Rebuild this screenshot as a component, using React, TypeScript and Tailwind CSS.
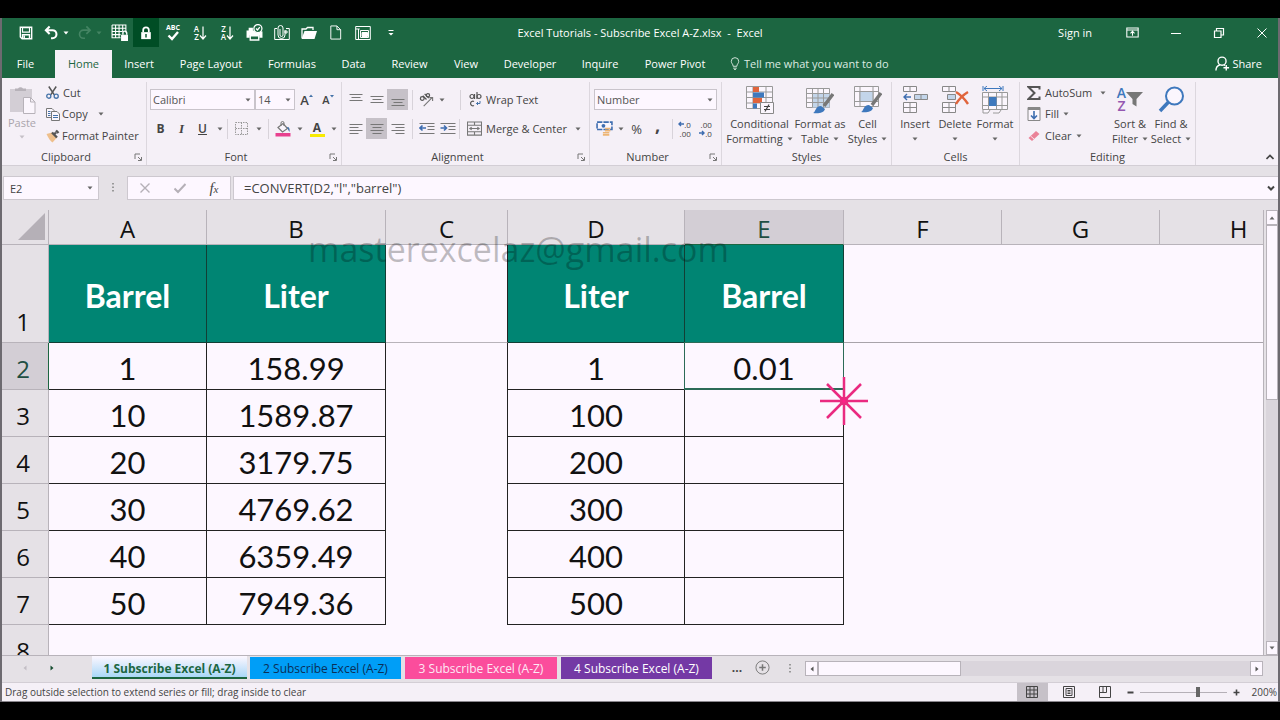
import React, { ReactNode } from "react";

const headers = ["A", "B", "C", "D", "E", "F", "G", "H"];

const rows = [
    { left: ["1", "158.99"], right: ["1", "0.01"] },
    { left: ["10", "1589.87"], right: ["100", ""] },
    { left: ["20", "3179.75"], right: ["200", ""] },
    { left: ["30", "4769.62"], right: ["300", ""] },
    { left: ["40", "6359.49"], right: ["400", ""] },
    { left: ["50", "7949.36"], right: ["500", ""] },
];

const menuTabs = [
    { name: "Insert", width: "w-[54px]" },
    { name: "Page Layout", width: "w-[90px]" },
    { name: "Formulas", width: "w-[72px]" },
    { name: "Data", width: "w-[51px]" },
    { name: "Review", width: "w-[61px]" },
    { name: "View", width: "w-[52px]" },
    { name: "Developer", width: "w-[76px]" },
    { name: "Inquire", width: "w-[64px]" },
    { name: "Power Pivot", width: "w-[86px]" },
];

function Icon({ children, className = "size-4", box = "0 0 16 16" }: { children: ReactNode; className?: string; box?: string }) {
    return (
        <svg viewBox={box} className={`shrink-0 ${className}`} fill="none" stroke="currentColor" aria-hidden="true">
            {children}
        </svg>
    );
}

function Caret({ className = "text-[#666]" }: { className?: string }) {
    return (
        <svg viewBox="0 0 6 4" className={`h-1 w-1.5 shrink-0 ${className}`} fill="currentColor" aria-hidden="true">
            <path d="M0.5 0.5h5L3 3.5z" />
        </svg>
    );
}

function Divider() {
    return <span className="h-5 w-px shrink-0 bg-[#d8d3da]" />;
}

interface ToolProps {
    label: string;
    width?: string;
    active?: boolean;
    children: ReactNode;
}

function Tool({ label, width = "w-[21px]", active, children }: ToolProps) {
    return (
        <button aria-label={label} className={`flex h-[21px] shrink-0 items-center justify-center ${width} ${active ? "bg-[#c6c1c8]" : ""}`}>
            {children}
        </button>
    );
}

function Group({ title, width, launcher, children }: { title: string; width: string; launcher?: boolean; children: ReactNode }) {
    return (
        <section className={`flex shrink-0 flex-col ${width}`}>
            <div className="flex flex-1 border-r border-[#dcd7de]">{children}</div>
            <div className={`relative flex h-4 items-center justify-center border-r border-[#dcd7de] ${launcher ? "pr-4" : ""}`}>
                <h2>{title}</h2>
                {launcher && (
                    <button aria-label={`${title} settings`} className="absolute right-1 top-1">
                        <Icon className="size-2 text-[#777]" box="0 0 8 8">
                            <path d="M1 6V1h5M4 4l3 3M7.5 4v3.5H4" />
                        </Icon>
                    </button>
                )}
            </div>
        </section>
    );
}

function BigTool({ icon, lines, width }: { icon: ReactNode; lines: string[]; width: string }) {
    return (
        <button className={`flex shrink-0 flex-col items-center pt-1 leading-[15px] ${width}`}>
            <span className="flex h-[30px] items-start justify-center">{icon}</span>
            <span className="whitespace-nowrap">{lines[0]}</span>
            <span className="flex h-[15px] items-center gap-1 whitespace-nowrap">
                {lines[1]}
                <Caret />
            </span>
        </button>
    );
}

function Dropdown({ label, value, width }: { label: string; value: string; width: string }) {
    return (
        <label className={`relative flex h-[21px] items-center ${width}`}>
            <select aria-label={label} defaultValue={value} className="h-full w-full appearance-none border border-[#c9c4cb] bg-[#fdf7ff] px-0.5 text-[11px] text-[#555] outline-none">
                <option>{value}</option>
            </select>
            <span className="pointer-events-none absolute right-1 flex">
                <Caret />
            </span>
        </label>
    );
}

/* Horizontal strokes used by the text alignment buttons */
function Lines({ d }: { d: string }) {
    return (
        <Icon className="size-[14px] text-[#777]" box="0 0 14 14">
            <path d={d} />
        </Icon>
    );
}

function TitleBar() {
    return (
        <header className="flex h-[29px] items-center text-white">
            <div className="flex h-full min-w-0 flex-1 basis-0 items-center">
                <span className="w-2.5" />
                <Tool label="Save" width="w-[27px]">
                    <Icon className="size-[14px]">
                        <path d="M1.5 1.5h13v13h-11l-2-2z" strokeWidth="1.6" />
                        <path d="M4 2h8v5H4z" strokeWidth="1.3" />
                        <path d="M4 14v-4h8v4M6 11v3" strokeWidth="1.6" />
                    </Icon>
                </Tool>
                <Tool label="Undo" width="w-[34px]">
                    <Icon className="mr-1 size-[15px]">
                        <path d="M6 1.5L2 5.5l4 4M2.5 5.5H9a4.3 4.3 0 0 1 0 8.6H7.5" strokeWidth="2.2" />
                    </Icon>
                    <Caret className="text-white" />
                </Tool>
                <span className="flex text-[#448463]">
                    <Tool label="Redo" width="w-[33px]">
                        <Icon className="mr-1 size-[15px]">
                            <path d="M10 1.5l4 4-4 4M13.5 5.5H7a4.3 4.3 0 0 0 0 8.6h1.5" strokeWidth="1.8" />
                        </Icon>
                        <Caret className="text-[#448463]" />
                    </Tool>
                </span>
                <Tool label="Protect sheet" width="w-[27px]">
                    <Icon className="size-[17px]">
                        <path d="M1 1h13v7M1 1v12h8M1 4h13M1 7h10M1 10h8M4.3 1v12M7.6 1v12M11 1v6" />
                        <path d="M10 10.5h6V15.5h-6z" fill="currentColor" />
                        <path d="M11.2 10V8.5a1.8 1.8 0 0 1 3.6 0V10" strokeWidth="1.3" />
                    </Icon>
                </Tool>
                <button aria-label="Lock cell" className="flex h-full w-[26px] items-center justify-center bg-[#004d25]">
                    <Icon className="size-[14px]">
                        <path d="M2.5 7h11v8h-11z" fill="currentColor" stroke="none" />
                        <path d="M4.8 7V4.7a3.2 3.2 0 0 1 6.4 0V7" strokeWidth="2" />
                        <path d="M8 9v4" stroke="#004d25" strokeWidth="1.6" />
                    </Icon>
                </button>
                <Tool label="Spelling" width="w-[28px]">
                    <span className="flex flex-col items-center">
                        <span className="text-[7px] font-bold leading-[7px]">ABC</span>
                        <Icon className="h-2.5 w-3" box="0 0 12 10">
                            <path d="M1.5 4.5L5 8l6-7" strokeWidth="2.4" />
                        </Icon>
                    </span>
                </Tool>
                {["AZ", "ZA"].map((order) => (
                    <Tool key={order} label={`Sort ${order}`} width="w-[27px]">
                        <span className="flex flex-col text-[8px] font-semibold leading-[8px]">
                            <span>{order[0]}</span>
                            <span>{order[1]}</span>
                        </span>
                        <Icon className="h-3.5 w-2" box="0 0 8 14">
                            <path d="M4 0.5V13M1 9.5l3 3.5 3-3.5" strokeWidth="1.2" />
                        </Icon>
                    </Tool>
                ))}
                <Tool label="Print preview" width="w-[27px]">
                    <Icon className="size-[17px]">
                        <path d="M0.5 6h11l4 1v6h-3v-2.5H3.5V13h-3zM2.5 3.5h4V6h-4z" fill="currentColor" stroke="none" />
                        <path d="M4 11h8v4H4z" strokeWidth="1.3" />
                        <circle cx="11.2" cy="4.3" r="3.8" fill="#1c6641" strokeWidth="1.2" />
                        <path d="M9.5 4.3l1.3 1.3 2.2-2.7" strokeWidth="1.2" />
                    </Icon>
                </Tool>
                <Tool label="Attach" width="w-[27px]">
                    <Icon className="size-4">
                        <path d="M3 3.5H0.7v11h14.6V3.5H12M11 6h2v2h-2z" />
                        <path d="M4 10V3a2.5 2.5 0 0 1 5 0v7a1.5 1.5 0 0 1-3 0V4M4 10a3.5 3.5 0 0 0 7 0V5" />
                    </Icon>
                </Tool>
                <Tool label="Open" width="w-[27px]">
                    <Icon className="size-4">
                        <path d="M1 13V4h4l1.5-1.5H12V5" strokeWidth="1.3" />
                        <path d="M3.5 6H16l-2.5 8H0.5z" fill="currentColor" stroke="none" />
                    </Icon>
                </Tool>
                <Tool label="New" width="w-[27px]">
                    <Icon className="size-[15px]">
                        <path d="M3 1h6.5L13.5 5v10H3zM9.5 1v4h4" />
                    </Icon>
                </Tool>
                <Tool label="Form" width="w-[28px]">
                    <Icon className="size-4">
                        <path d="M0.7 1.5h14.6v13H0.7zM0.7 4h4M3.5 4v10" />
                        <path d="M5.5 5.5h8v7h-8z" />
                        <path d="M7 7.5h5.5v4H7z" fill="currentColor" />
                    </Icon>
                </Tool>
                <Tool label="Customize toolbar" width="w-[27px]">
                    <Icon className="size-2" box="0 0 8 8">
                        <path d="M1.5 1.5h5" />
                        <path d="M1.5 4h5L4 6.5z" fill="currentColor" stroke="none" />
                    </Icon>
                </Tool>
            </div>
            <h1 className="whitespace-pre text-[11px]">Excel Tutorials - Subscribe Excel A-Z.xlsx  -  Excel</h1>
            <div className="flex min-w-0 flex-1 basis-0 items-center justify-end">
                <button className="mr-[29px]">Sign in</button>
                <Tool label="Ribbon display options" width="w-[22px]">
                    <Icon className="size-[13px]">
                        <path d="M1 2.5h14v11H1zM1 5h14M8 12V6.5M5.5 9L8 6.5 10.5 9" strokeWidth="1.3" />
                    </Icon>
                </Tool>
                <Tool label="Minimize" width="w-[65px]">
                    <Icon className="size-3" box="0 0 12 12">
                        <path d="M1 6.5h10" />
                    </Icon>
                </Tool>
                <Tool label="Restore" width="w-[22px]">
                    <Icon className="size-3" box="0 0 12 12">
                        <path d="M1.5 4h6.5v6.5H1.5zM3.5 4V1.5H10.5V8H8" strokeWidth="1.2" />
                    </Icon>
                </Tool>
                <span className="w-4" />
                <Tool label="Close" width="w-8">
                    <Icon className="size-3" box="0 0 12 12">
                        <path d="M1.5 1.5l9 9M10.5 1.5l-9 9" />
                    </Icon>
                </Tool>
            </div>
        </header>
    );
}

function MenuBar() {
    return (
        <nav className="flex h-[31px] items-stretch pt-0.5 text-white">
            <button className="w-[47px]">File</button>
            <button className="ml-1.5 mt-px w-[57px] bg-[#f5f0f7] pb-px text-[#1c6641]">Home</button>
            {menuTabs.map((tab) => (
                <button key={tab.name} className={`whitespace-nowrap ${tab.width}`}>
                    {tab.name}
                </button>
            ))}
            <button className="ml-3 flex items-center gap-1 whitespace-nowrap text-[#dcebe2]">
                <Icon className="h-[13px] w-2.5" box="0 0 10 14">
                    <path d="M3 10C3 7.5 1 7 1 4.7a4 4 0 0 1 8 0C9 7 7 7.5 7 10zM3 12h4M4 13.5h2" />
                </Icon>
                Tell me what you want to do
            </button>
            <button className="ml-auto mr-4 flex items-center gap-0.5">
                <Icon className="size-[15px]">
                    <circle cx="7.5" cy="5.5" r="4.3" strokeWidth="1.5" />
                    <path d="M1 15.5c0-3.5 2-5.5 4.5-6.2M9.5 9.5l1 0.7M12 9.5v6M9 12.5h6" strokeWidth="1.5" />
                </Icon>
                Share
            </button>
        </nav>
    );
}

function Ribbon() {
    return (
        <div className="flex h-[88px] border-b border-[#d3ced5] bg-[#f5f0f7] pt-1 text-[#444]">
            <Group title="Clipboard" width="w-[145px]" launcher>
                <button className="flex w-10 flex-col items-center pt-1 text-[#aaa5ac]">
                    <Icon className="h-[29px] w-7" box="0 0 28 29">
                        <path d="M2 3h22v9h-9v14H2z" fill="#d3ced5" stroke="none" />
                        <path d="M7 5V2.5h3a3 3 0 0 1 5 0h3V5z" fill="#b7b2b9" stroke="none" />
                        <path d="M15.5 11.5h7l4.5 4.5v11.5H15.5zM22.5 11.5V16H27" fill="#fbf6fd" stroke="#b7b2b9" />
                    </Icon>
                    <span className="leading-4">Paste</span>
                    <span className="flex h-3 items-center">
                        <Caret className="text-[#c5c0c7]" />
                    </span>
                </button>
                <div className="flex flex-col">
                    <button className="flex h-[21px] items-center gap-1 pl-1">
                        <Icon className="size-[13px]" box="0 0 14 14">
                            <path d="M3 0.5l6 9M11 0.5l-6 9" stroke="#555" strokeWidth="1.6" />
                            <circle cx="3" cy="11" r="2.2" stroke="#4472a8" strokeWidth="1.4" />
                            <circle cx="11" cy="11" r="2.2" stroke="#4472a8" strokeWidth="1.4" />
                        </Icon>
                        Cut
                    </button>
                    <button className="flex h-[22px] items-center gap-0.5 pl-1">
                        <Icon className="size-[14px]" box="0 0 14 14">
                            <path d="M0.5 1.5h5.5l2 2v7H0.5z" fill="#fbf6fd" stroke="#777" />
                            <path d="M5.5 4.5H11l2.5 2.5v6.5h-8z" fill="#fbf6fd" stroke="#777" />
                            <path d="M2 4.5h2.5M2 6.5h2.5M2 8.5h2.5M7 8.5h5M7 10.5h5" stroke="#4472a8" />
                        </Icon>
                        Copy
                        <span className="ml-2 flex">
                            <Caret />
                        </span>
                    </button>
                    <button className="flex h-[22px] items-center gap-0.5 whitespace-nowrap pl-1">
                        <Icon className="size-[14px]" box="0 0 14 14">
                            <path d="M0.5 5L6 3.5l5 5-4.5 5c-2-1.5-4-4-6-8.5z" fill="#eebf8b" stroke="none" />
                            <path d="M6 3.5l5 5M8 5.5l2-2M10 1.5l2.5 2.5" stroke="#555" strokeWidth="2.4" />
                        </Icon>
                        Format Painter
                    </button>
                </div>
            </Group>

            <Group title="Font" width="w-[195px]" launcher>
                <div className="flex flex-col gap-2 pl-[3px] pt-[7px]">
                    <div className="flex">
                        <Dropdown label="Font" value="Calibri" width="w-[105px]" />
                        <Dropdown label="Font size" value="14" width="w-[40px]" />
                        <Tool label="Increase font size" width="w-[23px]">
                            <span className="text-[13px] font-semibold">A</span>
                            <Icon className="mb-2 size-1" box="0 0 4 4">
                                <path d="M0 3h4L2 0.5z" fill="#4472a8" stroke="none" />
                            </Icon>
                        </Tool>
                        <Tool label="Decrease font size" width="w-[20px]">
                            <span className="text-[11px] font-semibold">A</span>
                            <Icon className="mb-2 size-1" box="0 0 4 4">
                                <path d="M0 1h4L2 3.5z" fill="#4472a8" stroke="none" />
                            </Icon>
                        </Tool>
                    </div>
                    <div className="flex items-center">
                        <Tool label="Bold"><b className="text-[12px]">B</b></Tool>
                        <Tool label="Italic"><i className="font-[Liberation_Serif] text-[13px] font-semibold">I</i></Tool>
                        <Tool label="Underline"><span className="text-[12px] font-semibold underline">U</span></Tool>
                        <Tool label="Underline styles" width="w-[14px]"><Caret /></Tool>
                        <Divider />
                        <Tool label="Borders" width="w-[26px]">
                            <Icon className="size-[13px] text-[#999]" box="0 0 13 13">
                                <path d="M0.5 0.5h12v12H0.5zM6.5 0.5v12M0.5 6.5h12" strokeDasharray="1.5 1" />
                            </Icon>
                        </Tool>
                        <Tool label="Border styles" width="w-2.5"><Caret /></Tool>
                        <span className="w-1" />
                        <Divider />
                        <Tool label="Fill color" width="w-[28px]">
                            <Icon className="size-4">
                                <path d="M3 6.5l5-4 4.5 5-5 3.5z" fill="#fbf6fd" stroke="#777" strokeWidth="1.2" />
                                <path d="M6 5V2a1.5 1.5 0 0 1 3 0v3" stroke="#777" />
                                <path d="M12 6c2.5 0 3 2 2.5 5-1-1-1.5-3-2.5-5z" fill="#4472a8" stroke="none" />
                                <path d="M0.5 12h15v3.5h-15z" fill="#e8408f" stroke="none" />
                            </Icon>
                        </Tool>
                        <Tool label="Fill colors" width="w-1.5"><Caret /></Tool>
                        <Tool label="Font color" width="w-[28px]">
                            <span className="flex w-[15px] flex-col items-center border-b-[3px] border-[#f7ea00] text-[12px] font-bold leading-[13px]">A</span>
                        </Tool>
                        <Tool label="Font colors" width="w-1.5"><Caret /></Tool>
                    </div>
                </div>
            </Group>

            <Group title="Alignment" width="w-[248px]" launcher>
                <div className="flex flex-col gap-2 pl-[3px] pt-[7px]">
                    <div className="flex items-center">
                        <Tool label="Top align"><Lines d="M0.5 1.5h13M2.5 4.5h9M0.5 7.5h13" /></Tool>
                        <Tool label="Middle align"><Lines d="M0.5 3.5h13M2.5 6.5h9M0.5 9.5h13" /></Tool>
                        <Tool label="Bottom align" active><Lines d="M0.5 6.5h13M2.5 9.5h9M0.5 12.5h13" /></Tool>
                        <span className="w-1" />
                        <Divider />
                        <Tool label="Orientation" width="w-[26px]">
                            <Icon className="size-[15px]">
                                <path d="M5 15L14 6M11 6h3.5v3.5" stroke="#777" strokeWidth="1.2" />
                                <circle cx="3.5" cy="7" r="2" stroke="#555" strokeWidth="1.3" />
                                <path d="M4 4l4 4M6 2l4.5 4.5" stroke="#555" strokeWidth="1.3" />
                                <circle cx="9.5" cy="3.5" r="1.8" stroke="#555" strokeWidth="1.3" />
                            </Icon>
                        </Tool>
                        <Caret />
                        <span className="w-[15px]" />
                        <Divider />
                        <button className="flex items-center gap-1 whitespace-nowrap pl-2">
                            <Icon className="h-[15px] w-[13px]" box="0 0 13 15">
                                <circle cx="3" cy="4.5" r="2" stroke="#555" strokeWidth="1.2" />
                                <path d="M5.5 2v5M8 0v7" stroke="#555" strokeWidth="1.2" />
                                <circle cx="10" cy="4.5" r="2" stroke="#555" strokeWidth="1.2" />
                                <path d="M5 9.5a2.3 2.3 0 1 0 0 4" stroke="#555" strokeWidth="1.2" />
                                <path d="M11 9v2.5H7.5M9 10l-1.5 1.5L9 13" stroke="#4472a8" />
                            </Icon>
                            Wrap Text
                        </button>
                    </div>
                    <div className="flex items-center">
                        <Tool label="Align left"><Lines d="M0.5 2.5h13M0.5 5.5h9M0.5 8.5h13M0.5 11.5h9" /></Tool>
                        <Tool label="Center" active><Lines d="M0.5 2.5h13M2.5 5.5h9M0.5 8.5h13M2.5 11.5h9" /></Tool>
                        <Tool label="Align right"><Lines d="M0.5 2.5h13M4.5 5.5h9M0.5 8.5h13M4.5 11.5h9" /></Tool>
                        <span className="w-1" />
                        <Divider />
                        <span className="w-[3px]" />
                        <Tool label="Decrease indent">
                            <Icon className="size-4">
                                <path d="M0.5 2.5h15M8.5 5.5h7M8.5 8.5h7M0.5 12.5h15" stroke="#777" />
                                <path d="M7 7H1M3.5 4.5L1 7l2.5 2.5" stroke="#3e6db0" strokeWidth="1.6" />
                            </Icon>
                        </Tool>
                        <Tool label="Increase indent">
                            <Icon className="size-4">
                                <path d="M0.5 2.5h15M8.5 5.5h7M8.5 8.5h7M0.5 12.5h15" stroke="#777" />
                                <path d="M0.5 7h6M4 4.5L6.5 7 4 9.5" stroke="#3e6db0" strokeWidth="1.6" />
                            </Icon>
                        </Tool>
                        <span className="w-px" />
                        <Divider />
                        <button className="flex items-center gap-1 whitespace-nowrap pl-[7px]">
                            <Icon className="size-[15px]">
                                <path d="M0.5 1h15v14h-15zM0.5 4.5h15M0.5 11.5h15M8 1v3.5M8 11.5V15M3 8h10M5 6.5L3 8l2 1.5M11 6.5L13 8l-2 1.5" stroke="#777" strokeWidth="1.2" />
                            </Icon>
                            Merge &amp; Center
                            <span className="ml-1 flex">
                                <Caret />
                            </span>
                        </button>
                    </div>
                </div>
            </Group>

            <Group title="Number" width="w-[132px]" launcher>
                <div className="flex flex-col gap-2 pl-1 pt-[7px]">
                    <Dropdown label="Number format" value="Number" width="w-[123px]" />
                    <div className="flex items-center">
                        <Tool label="Accounting format">
                            <Icon className="size-[17px]">
                                <path d="M1 2h14v7H1z" fill="#fbf6fd" stroke="#3e6db0" strokeWidth="1.5" strokeDasharray="5 1" />
                                <circle cx="7" cy="5.5" r="1.8" fill="#3e6db0" stroke="none" />
                                <path d="M8.5 8h5M8.5 10h5M6.5 12h6M6.5 14h6" stroke="#edb574" strokeWidth="1.6" />
                            </Icon>
                        </Tool>
                        <Tool label="Currency" width="w-[11px]"><Caret /></Tool>
                        <Tool label="Percent"><span className="text-[13px]">%</span></Tool>
                        <Tool label="Comma"><span className="pb-2 text-[18px] font-bold leading-[12px]">,</span></Tool>
                        <span className="w-1" />
                        <Divider />
                        <span className="w-px" />
                        <Tool label="Increase decimal">
                            <span className="flex flex-col items-end text-[8px] leading-[9px]">
                                <span className="flex items-center">
                                    <Icon className="size-1.5" box="0 0 6 6"><path d="M6 3H1M3 1L1 3l2 2" stroke="#3e6db0" strokeWidth="1.4" /></Icon>
                                    .0
                                </span>
                                <span>.00</span>
                            </span>
                        </Tool>
                        <Tool label="Decrease decimal">
                            <span className="flex flex-col items-end text-[8px] leading-[9px]">
                                <span>.00</span>
                                <span className="flex items-center">
                                    <Icon className="size-1.5" box="0 0 6 6"><path d="M0 3h5M3 1l2 2-2 2" stroke="#3e6db0" strokeWidth="1.4" /></Icon>
                                    .0
                                </span>
                            </span>
                        </Tool>
                    </div>
                </div>
            </Group>

            <Group title="Styles" width="w-[170px]">
                <div className="flex pl-1">
                    <BigTool
                        width="w-[67px]"
                        lines={["Conditional", "Formatting"]}
                        icon={
                            <Icon className="size-7" box="0 0 28 28">
                                <path d="M0.5 0.5h26v22H0.5zM0.5 6h26M0.5 11.5h26M0.5 17h26M7 0.5v22M20 0.5v22" fill="#fbf6fd" stroke="#999" />
                                <path d="M7 1h6v5H7zM7 12h9v5H7z" fill="#e0643c" stroke="none" />
                                <path d="M7 6.5h11v5H7zM7 17.5h4v5H7z" fill="#3e78bd" stroke="none" />
                                <path d="M14.5 16.5h13v11h-13z" fill="#fbf6fd" stroke="#888" />
                                <path d="M18 20.5h6M18 23.5h6M23 18.5l-4 7" stroke="#444" strokeWidth="1.2" />
                            </Icon>
                        }
                    />
                    <BigTool
                        width="w-[54px]"
                        lines={["Format as", "Table"]}
                        icon={
                            <Icon className="size-7" box="0 0 28 28">
                                <path d="M0.5 2.5h23v19H0.5z" fill="#fbf6fd" stroke="#999" />
                                <path d="M6 7.5h17.5v14H6z" fill="#c3d5ea" stroke="none" />
                                <path d="M0.5 7.5h23M0.5 12h23M0.5 16.5h23M6.5 2.5v19M12 2.5v19M17.5 2.5v19" stroke="#999" />
                                <path d="M27 8l-9 12" stroke="#777" strokeWidth="3.5" />
                                <path d="M7 27c3-1 2-7 8-7l4 3c-1 4-7 5-12 4z" fill="#3e78bd" stroke="none" />
                            </Icon>
                        }
                    />
                    <BigTool
                        width="w-[41px]"
                        lines={["Cell", "Styles"]}
                        icon={
                            <Icon className="size-7" box="0 0 28 28">
                                <path d="M0.5 0.5h24v20H0.5zM0.5 5.5h24M0.5 15.5h24M6 0.5v20M19 0.5v20" fill="#fbf6fd" stroke="#999" />
                                <path d="M6 5.5h13v10H6z" fill="#c3d5ea" stroke="#999" />
                                <path d="M27 7l-9 12" stroke="#777" strokeWidth="3.5" />
                                <path d="M7 26c3-1 2-7 8-7l4 3c-1 4-7 5-12 4z" fill="#3e78bd" stroke="none" />
                            </Icon>
                        }
                    />
                </div>
            </Group>

            <Group title="Cells" width="w-[128px]">
                <div className="flex pl-[3px]">
                    <BigTool
                        width="w-10"
                        lines={["Insert", ""]}
                        icon={
                            <Icon className="h-7 w-[26px]" box="0 0 26 28">
                                <path d="M1.5 0.5h13v5h-13zM8 0.5v5M1.5 16.5h13v10h-13zM8 16.5v10M1.5 21.5h13" fill="#fbf6fd" stroke="#888" />
                                <path d="M12.5 8.5h13v5h-13zM19 8.5v5" fill="#c3d5ea" stroke="#888" />
                                <path d="M9 11H2M5 8l-3 3 3 3" stroke="#3e6db0" strokeWidth="1.4" />
                            </Icon>
                        }
                    />
                    <BigTool
                        width="w-10"
                        lines={["Delete", ""]}
                        icon={
                            <Icon className="size-7" box="0 0 28 28">
                                <path d="M1.5 0.5h13v5h-13zM8 0.5v5M1.5 16.5h13v10h-13zM8 16.5v10M1.5 21.5h13" fill="#fbf6fd" stroke="#888" />
                                <path d="M6.5 8.5h8v5h-8z" fill="#c3d5ea" stroke="#888" />
                                <path d="M15 6c5 3 8 6 12 12M27 6c-5 3-9 7-12 12" stroke="#e0643c" strokeWidth="2.4" />
                            </Icon>
                        }
                    />
                    <BigTool
                        width="w-10"
                        lines={["Format", ""]}
                        icon={
                            <Icon className="size-7" box="0 0 28 28">
                                <path d="M2 0v5M22 0v5M3 2.5h18M6 0L3 2.5 6 5M18 0l3 2.5L18 5" stroke="#3e78bd" />
                                <path d="M1.5 6.5h25v17h-25zM1.5 11h25M1.5 19.5h25M7.5 6.5v17M15.5 6.5v17M21 6.5v17M2 24v3h5l2-3M12 27h6l2-3" fill="#fbf6fd" stroke="#999" />
                                <path d="M8 11h7.5v9H8z" fill="#3e78bd" stroke="none" />
                            </Icon>
                        }
                    />
                </div>
            </Group>

            <Group title="Editing" width="w-[176px]">
                <div className="flex w-[89px] flex-col pl-[7px]">
                    <button className="flex h-[21px] items-center gap-1 whitespace-nowrap">
                        <Icon className="size-[14px]" box="0 0 14 14">
                            <path d="M12.5 3.5V1H1.5l6 6-6 6h11v-2.5" stroke="#555" strokeWidth="2" />
                        </Icon>
                        AutoSum
                        <span className="ml-1 flex">
                            <Caret />
                        </span>
                    </button>
                    <button className="flex h-[22px] items-center gap-1">
                        <Icon className="size-[14px]" box="0 0 14 14">
                            <path d="M1 0.5h12v13H1z" fill="#fbf6fd" stroke="#888" />
                            <path d="M1 1h12v2H1z" fill="#888" stroke="none" />
                            <path d="M7 4v8M4 8.5l3 3 3-3" stroke="#3e6db0" strokeWidth="1.6" />
                        </Icon>
                        Fill
                        <Caret />
                    </button>
                    <button className="flex h-[22px] items-center gap-1">
                        <Icon className="size-[14px]" box="0 0 14 14">
                            <path d="M1.5 9L9 2l3.5 3L5 12z" fill="#ea8298" stroke="none" />
                            <path d="M3.5 7l3.5 3" stroke="#f9e3ea" />
                        </Icon>
                        Clear
                        <Caret />
                    </button>
                </div>
                <BigTool
                    width="w-[42px]"
                    lines={["Sort &", "Filter"]}
                    icon={
                        <span className="flex items-center">
                            <span className="flex flex-col text-[14px] font-semibold leading-[13px]">
                                <span className="text-[#3e78bd]">A</span>
                                <span className="text-[#9457b0]">Z</span>
                            </span>
                            <Icon className="h-4 w-[17px]" box="0 0 17 16">
                                <path d="M0 1h17l-6.5 7v7.5L6.5 13V8z" fill="#777" stroke="none" />
                            </Icon>
                        </span>
                    }
                />
                <BigTool
                    width="w-10"
                    lines={["Find &", "Select"]}
                    icon={
                        <Icon className="size-7" box="0 0 28 28">
                            <circle cx="17.5" cy="10" r="8.5" fill="#fbf6fd" stroke="#3e78bd" strokeWidth="2" />
                            <path d="M11.5 16L3 25" stroke="#3e78bd" strokeWidth="3.5" />
                        </Icon>
                    }
                />
            </Group>
            <button aria-label="Collapse ribbon" className="ml-auto mr-1 self-end pb-1">
                <Icon className="size-2" box="0 0 8 8">
                    <path d="M0.5 6L4 2.5 7.5 6" strokeWidth="1.6" />
                </Icon>
            </button>
        </div>
    );
}

function FormulaBar() {
    return (
        <div className="flex h-11 items-start bg-[#e5e1e6] pt-[10px] text-[#444]">
            <label className="relative ml-px flex h-6 w-24 items-center">
                <input aria-label="Name box" defaultValue="E2" className="h-full w-full border border-[#cdc8cf] bg-[#fdf7ff] px-1.5 outline-none" />
                <span className="absolute right-1.5 flex">
                    <Caret />
                </span>
            </label>
            <Icon className="mx-[13px] mt-[7px] h-2.5 w-0.5 text-[#999]" box="0 0 2 10">
                <path d="M1 0v10" strokeWidth="2" strokeDasharray="1.5 2" />
            </Icon>
            <div className="flex h-6 w-[104px] items-center justify-around border border-[#cdc8cf] bg-[#fdf7ff] text-[#b5b0b7]">
                <button aria-label="Cancel">
                    <Icon className="size-3" box="0 0 12 12"><path d="M1.5 1.5l9 9M10.5 1.5l-9 9" strokeWidth="1.4" /></Icon>
                </button>
                <button aria-label="Enter">
                    <Icon className="size-3" box="0 0 12 12"><path d="M0.5 6.5L4 10l7.5-8" strokeWidth="2" /></Icon>
                </button>
                <button aria-label="Insert function" className="font-[Liberation_Serif] text-[15px] italic leading-4 text-[#444]">
                    f<span className="text-[11px]">x</span>
                </button>
            </div>
            <div className="ml-[2px] flex h-6 flex-1 items-center border border-r-0 border-[#cdc8cf] bg-[#fdf7ff] pr-[3px]">
                <input aria-label="Formula" defaultValue={'=CONVERT(D2,"l","barrel")'} className="h-full min-w-0 flex-1 px-2.5 text-[13px] outline-none" />
                <button aria-label="Expand formula bar">
                    <Icon className="size-2" box="0 0 8 8"><path d="M1 2.5l3 3 3-3" strokeWidth="2" /></Icon>
                </button>
            </div>
        </div>
    );
}

/* Eight-ray pointer marker over the fill handle */
function Marker() {
    return (
        <svg viewBox="0 0 50 50" className="pointer-events-none absolute -bottom-[37px] -right-[26px] z-10 size-[50px]" fill="none" stroke="#ea2a80" strokeWidth="2.5" aria-hidden="true">
            <path d="M1 25h48M25 1v48M8 8l34 34M42 8L8 42" />
            <circle cx="25" cy="25" r="3" fill="#ff1f87" />
        </svg>
    );
}

function Sheet() {
    const rowHead = "border-b border-r border-[#b8b3ba] py-0 pl-0 pr-1 align-bottom text-[24px] font-normal leading-[40px]";
    const cell = "border-b border-r border-[#222] px-0 pb-0 pt-1";
    const title = "border-b border-r border-[#123f35] bg-[#008573] px-0 pb-0 pt-1 font-[Lato] text-[32px] font-bold text-white";

    return (
        <div className="relative flex min-h-0 flex-1 bg-[#e5e1e6]">
            <div className="min-w-0 flex-1 overflow-hidden border-r border-[#b8b3ba] bg-[#fdf7ff]">
                <table className="w-[1316px] table-fixed border-separate border-spacing-0 text-center text-[#111]">
                    <colgroup>
                        <col className="w-[47px]" />
                        <col className="w-[158px]" />
                        <col className="w-[179px]" />
                        <col className="w-[122px]" />
                        <col className="w-[177px]" />
                        <col className="w-[159px]" />
                        <col className="w-[158px]" />
                        <col className="w-[158px]" />
                        <col className="w-[158px]" />
                    </colgroup>
                    <thead>
                        <tr className="h-[35px] bg-[#e5e1e6] text-[24px] leading-[30px]">
                            <th className="border-b border-r border-[#b8b3ba] p-0" aria-label="Select all">
                                <Icon className="ml-auto mr-[3px] h-7 w-[27px]" box="0 0 27 28">
                                    <path d="M27 0v27H0z" fill="#b5b0b7" stroke="none" />
                                </Icon>
                            </th>
                            {headers.map((name) => (
                                <th
                                    key={name}
                                    className={`border-b border-r px-0 pb-0 pt-1 font-normal ${name === "E" ? "border-b-[#1c6641] border-r-[#b8b3ba] bg-[#d3ced5] text-[#1f4f43]" : "border-[#b8b3ba]"}`}
                                >
                                    {name}
                                </th>
                            ))}
                        </tr>
                    </thead>
                    <tbody>
                        <tr className="h-[98px]">
                            <th className={`bg-[#e5e1e6] ${rowHead}`}>1</th>
                            <td className={title}>Barrel</td>
                            <td className={title}>Liter</td>
                            <td className="border-b border-r border-b-[#b8b3ba] border-r-[#222]" />
                            <td className={title}>Liter</td>
                            <td className={title}>Barrel</td>
                            <td colSpan={3} className="border-b border-[#a8a3aa]" />
                        </tr>
                        {rows.map((row, index) => (
                            <tr key={index} className="h-[47px] font-[Lato] text-[31px] leading-[42px]">
                                <th className={`font-[Open_Sans] ${rowHead} ${index === 0 ? "border-r-[#1c6641] bg-[#d3ced5] text-[#1f4f43]" : "bg-[#e5e1e6]"}`}>{index + 2}</th>
                                <td className={cell}>{row.left[0]}</td>
                                <td className={cell}>{row.left[1]}</td>
                                <td className="border-r border-[#222]" />
                                <td className={cell}>{row.right[0]}</td>
                                <td className={`relative ${cell}`}>
                                    {row.right[1]}
                                    {index === 0 && (
                                        <>
                                            <span className="absolute -inset-px border border-b-2 border-[#2c6b57]" />
                                            <Marker />
                                        </>
                                    )}
                                </td>
                                <td colSpan={3} />
                            </tr>
                        ))}
                        <tr className="h-[47px]">
                            <th className={`bg-[#e5e1e6] ${rowHead}`}>8</th>
                            <td colSpan={8} />
                        </tr>
                    </tbody>
                </table>
            </div>
            <div className="ml-0.5 flex w-3 flex-col bg-[#dad5dc]">
                <button aria-label="Scroll up" className="flex h-[15px] items-center justify-center border border-[#b8b3ba] bg-[#fdf7ff]">
                    <Caret className="rotate-180 text-[#666]" />
                </button>
                <div className="h-[175px] border border-[#b8b3ba] bg-[#fdf7ff]" />
                <button aria-label="Scroll down" className="mt-auto flex h-[14px] items-center justify-center border border-[#b8b3ba] bg-[#fdf7ff]">
                    <Caret />
                </button>
            </div>
            <p className="pointer-events-none absolute left-[306px] top-[18px] text-[34px] leading-[42px] text-black/25">masterexcelaz@gmail.com</p>
        </div>
    );
}

function SheetTabs() {
    const tab = "h-[22px] shrink-0 whitespace-nowrap pt-0.5 text-[12px]";

    return (
        <div className="flex h-[27px] items-start border-t border-[#b8b3ba] bg-[#e5e1e6]">
            <div className="flex h-6 w-[90px] items-center gap-[21px] pl-5">
                <button aria-label="Previous sheet"><Caret className="rotate-90 text-[#c3bec5]" /></button>
                <button aria-label="Next sheet"><Caret className="-rotate-90 text-[#174d31]" /></button>
            </div>
            <button className="h-[23px] w-[155px] shrink-0 whitespace-nowrap border-b-2 border-[#1c6641] bg-linear-to-b from-[#fdf7ff] to-[#a9d8f7] pt-1 text-[12px] font-bold text-[#1c6641]">
                1 Subscribe Excel (A-Z)
            </button>
            <button className={`${tab} ml-[3px] mt-px w-[151px] bg-[#009ef7] text-[#0b2f57]`}>2 Subscribe Excel (A-Z)</button>
            <button className={`${tab} ml-1 mt-px w-[152px] bg-[#fb4d9c] text-[#fde9f4]`}>3 Subscribe Excel (A-Z)</button>
            <button className={`${tab} ml-1 mt-px w-[151px] bg-[#7439a5] text-white`}>4 Subscribe Excel (A-Z)</button>
            <button className={`${tab} ml-[18px] w-3.5 font-bold text-[#444]`}>...</button>
            <button aria-label="New sheet" className="ml-[11px] mt-1">
                <Icon className="size-[15px] text-[#777]">
                    <circle cx="8" cy="8" r="7" />
                    <path d="M8 4.5v7M4.5 8h7" strokeWidth="1.6" />
                </Icon>
            </button>
            <Icon className="ml-[19px] mt-2 h-2.5 w-0.5 text-[#999]" box="0 0 2 10">
                <path d="M1 0v10" strokeWidth="2" strokeDasharray="1.5 2" />
            </Icon>
            <div className="ml-3.5 mr-[15px] mt-[5px] flex h-[15px] flex-1 bg-[#dad5dc]">
                <button aria-label="Scroll left" className="flex w-[13px] items-center justify-center border border-[#b8b3ba] bg-[#fdf7ff]">
                    <Caret className="rotate-90 text-[#555]" />
                </button>
                <div className="w-[143px] border border-[#b8b3ba] bg-[#fdf7ff]" />
                <button aria-label="Scroll right" className="ml-auto flex w-[13px] items-center justify-center border border-[#b8b3ba] bg-[#fdf7ff]">
                    <Caret className="-rotate-90 text-[#555]" />
                </button>
            </div>
        </div>
    );
}

function StatusBar() {
    return (
        <footer className="flex h-5 items-center border-y border-t-[#d3ced5] border-b-[#8a868c] bg-[#f5f0f7] text-[10px] text-[#444]">
            <p className="pl-[3px]">Drag outside selection to extend series or fill; drag inside to clear</p>
            <button aria-label="Normal view" className="ml-auto flex h-full w-[31px] items-center justify-center bg-[#c6c1c8]">
                <Icon className="size-3" box="0 0 12 12"><path d="M0.5 0.5h11v11H0.5zM0.5 4h11M0.5 8h11M4 0.5v11M8 0.5v11" /></Icon>
            </button>
            <button aria-label="Page layout view" className="ml-[15px]">
                <Icon className="size-3" box="0 0 12 12"><path d="M0.5 0.5h11v11H0.5zM3 2.5h6v7H3zM4.5 4.5h3M4.5 6h3M4.5 7.5h3" /></Icon>
            </button>
            <button aria-label="Page break view" className="ml-6">
                <Icon className="size-3" box="0 0 12 12"><path d="M0.5 0.5h11v11H0.5zM4 0.5v6M7.5 0.5v6M0.5 6.5h7" /></Icon>
            </button>
            <button aria-label="Zoom out" className="ml-4">
                <Icon className="size-[7px]" box="0 0 7 7"><path d="M0.5 3.5h6" strokeWidth="2" /></Icon>
            </button>
            <input
                type="range"
                aria-label="Zoom"
                min={0}
                max={100}
                defaultValue={68}
                className="mx-1.5 h-px w-[87px] appearance-none bg-[#b5b0b7] [&::-webkit-slider-thumb]:h-2.5 [&::-webkit-slider-thumb]:w-1 [&::-webkit-slider-thumb]:appearance-none [&::-webkit-slider-thumb]:bg-[#666]"
            />
            <button aria-label="Zoom in">
                <Icon className="size-[7px]" box="0 0 7 7"><path d="M0.5 3.5h6M3.5 0.5v6" strokeWidth="1.6" /></Icon>
            </button>
            <span className="ml-3 mr-px">200%</span>
        </footer>
    );
}

export default function App() {
    return (
        <div className="h-screen bg-black py-[18px] font-['Open_Sans','Noto_Sans',sans-serif] text-[11px] leading-4">
            <main className="flex h-full flex-col overflow-hidden border-l-2 border-r-2 border-[#6d6a70] bg-[#e5e1e6]">
                <div className="bg-[#1c6641]">
                    <TitleBar />
                    <MenuBar />
                </div>
                <Ribbon />
                <FormulaBar />
                <Sheet />
                <SheetTabs />
                <StatusBar />
            </main>
        </div>
    );
}
